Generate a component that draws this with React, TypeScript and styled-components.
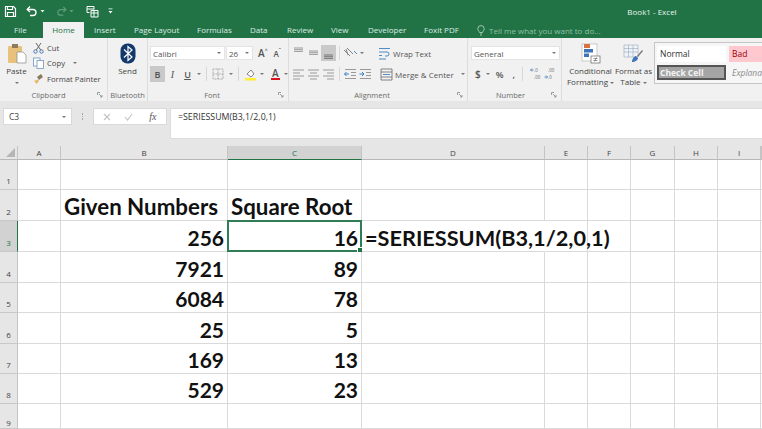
import React from "react";
import styled, { createGlobalStyle } from "styled-components";

const Global = createGlobalStyle`
  html, body { margin: 0; padding: 0; width: 762px; height: 429px; overflow: hidden; background: #fff; }
  body { font-family: "Open Sans", "Noto Sans", sans-serif; }
`;

const Page = styled.div`
  width: 762px; height: 429px; overflow: hidden; display: flex; flex-direction: column; background: #fff;
`;
const Green = "#217346";

const TitleBar = styled.div`
  height: 22px; background: ${Green}; display: flex; align-items: center; padding-left: 4px; color: #fff; flex: none;
`;
const QuickIcon = styled.svg<{ $gap?: number }>`
  flex: none; margin-right: ${(p) => p.$gap ?? 0}px; display: block;
`;
const DocTitle = styled.div`
  margin-left: auto; margin-right: 85px; font-size: 8px; color: #e9f3ec; width: 50px; text-align: center; white-space: nowrap;
`;
const TabBar = styled.div`
  height: 16px; background: ${Green}; display: flex; align-items: stretch; flex: none; padding-left: 14px;
`;
const Tab = styled.div<{ $active?: boolean; $w: number; $pl?: number }>`
  width: ${(p) => p.$w}px; flex: none; font-size: 8px; line-height: 16px; text-align: ${(p) => (p.$active ? "center" : "left")};
  padding-left: ${(p) => p.$pl ?? 0}px; box-sizing: border-box;
  color: ${(p) => (p.$active ? "#217346" : "#dcebe2")}; background: ${(p) => (p.$active ? "#f1f1f1" : "transparent")};
  white-space: nowrap;
`;
const TellMe = styled.div`
  display: flex; align-items: center; gap: 4px; font-size: 8px; color: #8fc0a3; white-space: nowrap;
`;
const Ribbon = styled.div`
  height: 63px; flex: none; background: #f1f1f1; display: flex; overflow: hidden;
`;
const Group = styled.div<{ $w: number }>`
  width: ${(p) => p.$w}px; flex: none; display: flex; flex-direction: column; border-right: 1px solid #dcdcdc; box-sizing: border-box; padding-top: 4px; position: relative;
`;
const GroupBody = styled.div`
  height: 47px; display: flex; flex: none;
`;
const StylesBody = styled(GroupBody)`
  flex: 1; padding-top: 4px;
`;
const GroupLabel = styled.div<{ $shift?: number }>`
  font-size: 7.5px; line-height: 12px; color: #6a6a6a; text-align: center; margin-left: ${(p) => p.$shift ?? 0}px;
`;
const Launcher = styled.svg`
  position: absolute; right: 4px; bottom: 3px;
`;
const BigButton = styled.div<{ $w: number; $ml?: number }>`
  width: ${(p) => p.$w}px; margin-left: ${(p) => p.$ml ?? 0}px; flex: none; display: flex; flex-direction: column; align-items: center;
  font-size: 8px; line-height: 11px; color: #444; text-align: center; white-space: nowrap;
`;
const BigIconSlot = styled.div`
  height: 22px; display: flex; align-items: center; justify-content: center; margin-bottom: 1px;
`;
const SmallStack = styled.div`
  display: flex; flex-direction: column; margin: -2px 0 0 5px;
`;
const SmallRow = styled.div`
  height: 15.5px; display: flex; align-items: center; gap: 3px; font-size: 7.7px; color: #444; white-space: nowrap;
`;
const Caret = styled.span<{ $ml?: number; $mt?: number }>`
  display: inline-block; width: 0; height: 0; border-left: 2px solid transparent; border-right: 2px solid transparent; border-top: 2px solid #777; flex: none;
  margin-left: ${(p) => p.$ml ?? 0}px; margin-top: ${(p) => p.$mt ?? 0}px; vertical-align: middle;
`;
const Column = styled.div<{ $pl?: number }>`
  display: flex; flex-direction: column; padding-left: ${(p) => p.$pl ?? 0}px; gap: 5px; padding-top: 3px;
`;
const Line = styled.div`
  display: flex; align-items: center; height: 16px; flex: none;
`;
const Combo = styled.div<{ $w: number; $ml?: number }>`
  width: ${(p) => p.$w}px; height: 14px; background: #fff; border: 1px solid #e3e3e3; box-sizing: border-box; display: flex; align-items: center;
  justify-content: space-between; padding: 0 3px 0 2px; font-size: 8px; color: #555; flex: none; margin-left: ${(p) => p.$ml ?? 0}px;
`;
const FormatBtn = styled.div<{ $active?: boolean }>`
  width: 15px; height: 16px; background: ${(p) => (p.$active ? "#c9c9c9" : "transparent")}; display: flex; align-items: center; justify-content: center; flex: none;
`;
const ItalicI = styled.span`
  font-family: "Liberation Serif", serif; font-size: 10px; color: #555; font-style: italic;
`;
const Glyph = styled.span<{ $size?: number; $ml?: number; $up?: number; $u?: boolean }>`
  font-size: ${(p) => p.$size ?? 9}px; color: #555; font-weight: 600; margin-left: ${(p) => p.$ml ?? 0}px; margin-bottom: ${(p) => p.$up ?? 0}px;
  text-decoration: ${(p) => (p.$u ? "underline" : "none")};
`;
const ColorA = styled(Glyph)`
  line-height: 10px; border-bottom: 2.5px solid #d8141c; padding: 0 1px;
`;
const Divider = styled.div<{ $mx?: number }>`
  width: 1px; height: 14px; background: #d8d8d8; margin: 0 ${(p) => p.$mx ?? 4}px; flex: none;
`;
const TextAction = styled.div<{ $ml?: number }>`
  display: flex; align-items: center; gap: 2px; font-size: 8px; color: #555; white-space: nowrap; margin-left: ${(p) => p.$ml ?? 0}px;
`;
const Gallery = styled.div`
  flex: none; width: 108px; height: 42px; margin-left: 1px; border: 1px solid #c6c6c6; border-right: 0; box-sizing: border-box; display: grid;
  grid-template-columns: 69px 60px; grid-template-rows: 16px 15px; gap: 3px 3px; padding: 3px 0 0 2px; background: #f6f6f6; overflow: hidden;
`;
const StyleChip = styled.div<{ $kind: "normal" | "bad" | "check" | "exp" }>`
  font-size: 8.5px; line-height: 15px; padding-left: 3px; box-sizing: border-box; white-space: nowrap;
  ${(p) => p.$kind === "normal" && "background:#fff;color:#333;"}
  ${(p) => p.$kind === "bad" && "background:#ffc7ce;color:#9c0006;"}
  ${(p) => p.$kind === "check" && "background:#a5a5a5;color:#f4f4f4;font-weight:700;border:2px solid #555;line-height:11px;font-size:8.5px;padding-left:1px;"}
  ${(p) => p.$kind === "exp" && "background:#f6f6f6;color:#8a8a8a;font-style:italic;"}
`;
const FormulaArea = styled.div`
  height: 45px; flex: none; background: #e6e6e6; display: flex; align-items: flex-start; padding: 7px 0 0 3px; box-sizing: border-box;
`;
const NameBox = styled.div`
  width: 69px; height: 17px; background: #fff; border: 1px solid #d9d9d9; box-sizing: border-box; display: flex; align-items: center; justify-content: space-between; padding: 0 5px 0 5px; font-size: 8.5px; color: #444;
`;
const Grip = styled.div`
  width: 21px; display: flex; flex-direction: column; align-items: center; gap: 1px; padding-top: 5px; flex: none;
`;
const GripDot = styled.span`
  width: 1.5px; height: 1.5px; background: #a8a8a8; display: block;
`;
const FxBox = styled.div`
  width: 74px; height: 17px; background: #fff; border: 1px solid #d9d9d9; box-sizing: border-box; display: flex; align-items: center; justify-content: space-around; padding: 0 3px; flex: none;
`;
const FxText = styled.span`
  font-family: "Liberation Serif", serif; font-style: italic; font-size: 10px; color: #555; margin-left: 3px;
`;
const FormulaInput = styled.div`
  margin-left: 3px; flex: 1; height: 31px; background: #fff; border: 1px solid #dcdcdc; border-right: 0; box-sizing: border-box; font-size: 8.8px; line-height: 17px; padding-left: 7px; color: #333;
`;
const Sheet = styled.div`
  flex: 1; display: grid; overflow: hidden; background: #fff;
  grid-template-columns: 18px 43px 167px 134px 183px 43px 43px 44px 43px 43px 1px;
  grid-template-rows: 14px 30px 31px 31px 31px 30px 31px 30px 30px 25px;
  font-family: Lato, "Open Sans", sans-serif;
`;
const Corner = styled.div`
  background: #e6e6e6; border-right: 1px solid #c4c4c4; border-bottom: 1px solid #b8b8b8; box-sizing: border-box; display: flex; align-items: flex-end; justify-content: flex-end; padding: 0 2px 2px 0;
`;
const ColHead = styled.div<{ $on?: boolean }>`
  background: ${(p) => (p.$on ? "#d2d2d2" : "#e6e6e6")}; border-right: 1px solid #c4c4c4; border-bottom: 1px solid ${(p) => (p.$on ? "#217346" : "#b8b8b8")};
  box-sizing: border-box; text-align: center; font-family: "Open Sans", sans-serif; font-size: 8px; line-height: 14px; color: ${(p) => (p.$on ? "#217346" : "#444")};
`;
const RowHead = styled.div<{ $on?: boolean }>`
  background: ${(p) => (p.$on ? "#d2d2d2" : "#e6e6e6")}; border-right: 1px solid ${(p) => (p.$on ? "#217346" : "#c4c4c4")}; border-bottom: 1px solid #c8c8c8;
  box-sizing: border-box; display: flex; align-items: center; justify-content: center; font-family: "Open Sans", sans-serif; font-size: 8px; color: ${(p) => (p.$on ? "#217346" : "#444")}; padding-top: 12px;
`;
const Cell = styled.div<{ $align?: "left" | "right"; $overflow?: boolean; $size?: number }>`
  border-right: 1px solid ${(p) => (p.$overflow ? "transparent" : "#dadada")}; border-bottom: 1px solid #dadada; box-sizing: border-box; position: relative;
  font-weight: 700; font-size: ${(p) => p.$size ?? 21}px; line-height: 26px; color: #111; padding: 0 3px; white-space: nowrap;
  display: flex; align-items: flex-end; justify-content: ${(p) => (p.$align === "left" ? "flex-start" : "flex-end")};
  z-index: ${(p) => (p.$overflow ? 2 : 1)};
`;
const Selection = styled.div`
  position: absolute; left: -1px; top: -1px; right: -1px; bottom: -1px; border: 2px solid #2f7d55; pointer-events: none;
`;
const Handle = styled.div`
  position: absolute; right: -3px; bottom: -3px; width: 4px; height: 4px; background: #217346; border: 1px solid #fff;
`;

const Launch = () => (
  <Launcher width="6" height="6" viewBox="0 0 6 6" fill="none" stroke="#888" strokeWidth="0.8">
    <path d="M0.5 3V.5H3" />
    <path d="M2 2l3 3M5 3v2H3" />
  </Launcher>
);

const AlignIcon = ({ kind }: { kind: "l" | "c" | "r" | "t" | "m" | "b" }) => {
  const rows: [number, number][] =
    kind === "l" ? [[2, 13], [2, 9], [2, 13], [2, 9]]
    : kind === "c" ? [[2, 13], [4, 11], [2, 13], [4, 11]]
    : kind === "r" ? [[2, 13], [6, 13], [2, 13], [6, 13]]
    : [[3, 12], [3, 12], [3, 12]];
  const y0 = kind === "t" ? 2 : kind === "m" ? 5 : kind === "b" ? 9 : 3;
  const step = kind === "t" || kind === "m" || kind === "b" ? 1.7 : 3;
  return (
    <svg width="15" height="15" viewBox="0 0 15 15" stroke={kind === "b" ? "#777" : "#9a9a9a"} strokeWidth="1">
      {rows.map(([a, b], i) => <line key={i} x1={a} x2={b} y1={y0 + i * step} y2={y0 + i * step} />)}
    </svg>
  );
};
const IndentIcon = ({ flip }: { flip?: boolean }) => (
  <svg width="15" height="13" viewBox="0 0 15 13" fill="none" strokeWidth="1">
    <path d="M2 1.5h11M8 4.5h5M8 7.5h5M2 10.5h11" stroke="#999" />
    <path d={flip ? "M1.5 6h4M4 4l2 2-2 2" : "M6 6H1.5M3.5 4l-2 2 2 2"} stroke="#3b7fc4" />
  </svg>
);
const DecimalIcon = ({ top, bottom, more }: { top: string; bottom: string; more?: boolean }) => (
  <svg width="12" height="14" viewBox="0 0 12 14" fontFamily="Open Sans, sans-serif" fontSize="4.4" fill="#666" style={{ marginRight: 2 }}>
    <text x="4" y="5">{top}</text>
    <text x="4" y="12">{bottom}</text>
    <path d={more ? "M0.5 3h3M2 1.5L.5 3 2 4.500" : "M0.500 10h3M2 8.500L3.500 10 2 11.500"} fill="none" stroke="#3b7fc4" strokeWidth="0.8" />
  </svg>
);

const tabs: [string, number, number?, boolean?][] = [
  ["File", 29], ["Home", 41, 0, true], ["Insert", 50, 10], ["Page Layout", 63], ["Formulas", 53], ["Data", 37], ["Review", 44], ["View", 37], ["Developer", 56], ["Foxit PDF", 53],
];
const cols = ["A", "B", "C", "D", "E", "F", "G", "H", "I"];
const data: Record<number, Record<string, string>> = {
  2: { B: "Given Numbers", C: "Square Root" },
  3: { B: "256", C: "16", D: "=SERIESSUM(B3,1/2,0,1)" },
  4: { B: "7921", C: "89" },
  5: { B: "6084", C: "78" },
  6: { B: "25", C: "5" },
  7: { B: "169", C: "13" },
  8: { B: "529", C: "23" },
};

export default function App() {
  return (
    <Page>
      <Global />
      <TitleBar>
        <QuickIcon $gap={9} width="13" height="13" viewBox="0 0 13 13" fill="none" stroke="#fff" strokeWidth="1.2">
          <path d="M1.5 1.5h8l2 2v8h-10z" /><path d="M3.5 1.5v3h5v-3M3.5 11.5v-4h6v4" />
        </QuickIcon>
        <QuickIcon $gap={2} width="12" height="12" viewBox="0 0 12 12" fill="none" stroke="#fff" strokeWidth="1.3">
          <path d="M1.5 4.5h5.5a3 3 0 010 6H4" /><path d="M4 1.5l-2.8 3L4 7" />
        </QuickIcon>
        <QuickIcon $gap={11} width="5" height="12" viewBox="0 0 5 12" fill="#dfeee6"><path d="M0.5 5h4L2.5 7.5z" /></QuickIcon>
        <QuickIcon $gap={2} width="11" height="12" viewBox="0 0 12 12" fill="none" stroke="#5f9d7b" strokeWidth="1.3">
          <path d="M10.5 4.5H5a3 3 0 000 6h3" /><path d="M8 1.5l2.8 3L8 7" />
        </QuickIcon>
        <QuickIcon $gap={12} width="5" height="12" viewBox="0 0 5 12" fill="#5f9d7b"><path d="M0.5 5h4L2.5 7.5z" /></QuickIcon>
        <QuickIcon $gap={9} width="13" height="13" viewBox="0 0 13 13" fill="none" stroke="#fff" strokeWidth="1">
          <path d="M1 1.5h7v3M1 1.5v6h2.5M1 4h7" /><path d="M5 5.5h7v6.5H5zM5 8h7M8 5.5V12" />
        </QuickIcon>
        <QuickIcon width="5" height="12" viewBox="0 0 5 12" fill="#fff"><path d="M0.5 3.5h4v.8h-4zM0.5 6h4L2.5 8.5z" /></QuickIcon>
        <DocTitle>Book1 - Excel</DocTitle>
      </TitleBar>
      <TabBar>
        {tabs.map(([t, w, pl, a]) => (
          <Tab key={t} $w={w} $pl={pl} $active={a}>{t}</Tab>
        ))}
        <TellMe>
          <svg width="8" height="11" viewBox="0 0 8 11" fill="none" stroke="#a8d0b8" strokeWidth="0.9">
            <path d="M2.5 7.5C2 6 .8 5.500 .8 3.800a3.200 3.200 0 016.400 0C7.200 5.500 6 6 5.500 7.500zM3 9h2M3.400 10.300h1.200" />
          </svg>
          Tell me what you want to do...
        </TellMe>
      </TabBar>
      <Ribbon>
        <Group $w={108}>
          <GroupBody>
            <BigButton $w={23} $ml={5}>
              <BigIconSlot>
                <svg width="20" height="21" viewBox="0 0 20 21">
                  <rect x="1" y="3" width="14" height="17" rx="1" fill="#e8c27d" />
                  <rect x="5" y="1" width="6" height="4" fill="#8b7a5c" />
                  <path d="M10 9h6l3 3v8h-9z" fill="#fff" stroke="#888" strokeWidth="0.7" />
                </svg>
              </BigIconSlot>
              Paste
              <Caret $mt={6} />
            </BigButton>
            <SmallStack>
              <SmallRow>
                <svg width="11" height="12" viewBox="0 0 11 12" fill="none" stroke="#4a78b0" strokeWidth="1">
                  <circle cx="2.500" cy="9.500" r="1.700" /><circle cx="8.500" cy="9.500" r="1.700" />
                  <path d="M3.300 8L8 1M7.700 8L3 1" stroke="#666" />
                </svg>
                Cut
              </SmallRow>
              <SmallRow>
                <svg width="11" height="12" viewBox="0 0 11 12" fill="#fff" stroke="#6f94bd" strokeWidth="0.8">
                  <rect x="0.500" y="1" width="6.500" height="8" /><rect x="4" y="3.500" width="6.500" height="8" />
                </svg>
                Copy
                <Caret $ml={5} />
              </SmallRow>
              <SmallRow>
                <svg width="11" height="12" viewBox="0 0 11 12">
                  <path d="M4 4l4-3 2 3-4 3z" fill="#8a7a60" /><path d="M5 6.500L1 8l3 3 2-4z" fill="#e5b868" />
                </svg>
                Format Painter
              </SmallRow>
            </SmallStack>
          </GroupBody>
          <GroupLabel $shift={-10}>Clipboard</GroupLabel>
          <Launch />
        </Group>
        <Group $w={40}>
          <GroupBody>
            <BigButton $w={39}>
              <BigIconSlot>
                <svg width="16" height="21" viewBox="0 0 16 21">
                  <rect x="0.500" y="0.500" width="15" height="20" rx="7" fill="#12396b" />
                  <path d="M4 6.500l8 7.500-4 3.500V3.500l4 3.500-8 7.500" fill="none" stroke="#fff" strokeWidth="1.200" />
                </svg>
              </BigIconSlot>
              Send
            </BigButton>
          </GroupBody>
          <GroupLabel>Bluetooth</GroupLabel>
        </Group>
        <Group $w={141}>
          <GroupBody>
            <Column $pl={2}>
              <Line>
                <Combo $w={75}>Calibri<Caret /></Combo>
                <Combo $w={27} $ml={1}>26<Caret /></Combo>
                <Glyph $size={10} $ml={5}>A</Glyph>
                <Glyph $size={5} $up={7}>^</Glyph>
                <Glyph $size={8} $ml={6}>A</Glyph>
                <Glyph $size={5} $up={7}>ˇ</Glyph>
              </Line>
              <Line>
                <FormatBtn $active><Glyph $size={9}>B</Glyph></FormatBtn>
                <FormatBtn><ItalicI>I</ItalicI></FormatBtn>
                <FormatBtn><Glyph $size={9} $u>U</Glyph></FormatBtn>
                <Caret $ml={2} />
                <Divider $mx={5} />
                <svg width="12" height="12" viewBox="0 0 12 12" fill="none" stroke="#999" strokeWidth="0.8" strokeDasharray="1 0.5">
                  <path d="M1 1h10v10H1zM6 1v10M1 6h10" />
                </svg>
                <Caret $ml={5} />
                <Divider $mx={5} />
                <svg width="13" height="14" viewBox="0 0 13 14">
                  <path d="M3 7l4-4 3 4-3 3z" fill="#fff" stroke="#666" strokeWidth="0.8" />
                  <rect x="1" y="11" width="11" height="2.500" fill="#ffee33" />
                </svg>
                <Caret $ml={3} />
                <ColorA $size={10} $ml={7}>A</ColorA>
                <Caret $ml={4} />
              </Line>
            </Column>
          </GroupBody>
          <GroupLabel $shift={-12}>Font</GroupLabel>
          <Launch />
        </Group>
        <Group $w={179}>
          <GroupBody>
            <Column $pl={2}>
              <Line>
                <FormatBtn><AlignIcon kind="t" /></FormatBtn>
                <FormatBtn><AlignIcon kind="m" /></FormatBtn>
                <FormatBtn $active><AlignIcon kind="b" /></FormatBtn>
                <Divider $mx={3} />
                <svg width="15" height="13" viewBox="0 0 15 13" fill="none" stroke="#777" strokeWidth="0.9">
                  <path d="M1 3l6 6M4 1l6 6M3 2l2 6" /><path d="M11 4l3 3" stroke="#3b7fc4" />
                </svg>
                <Caret $ml={2} />
                <TextAction $ml={14}>
                  <svg width="13" height="13" viewBox="0 0 13 13" fill="none" stroke="#3b7fc4" strokeWidth="0.9">
                    <path d="M1 1.500h11M1 5h8a2 2 0 010 4H7M1 8.500h3M1 12h7" />
                  </svg>
                  Wrap Text
                </TextAction>
              </Line>
              <Line>
                <FormatBtn><AlignIcon kind="l" /></FormatBtn>
                <FormatBtn><AlignIcon kind="c" /></FormatBtn>
                <FormatBtn><AlignIcon kind="r" /></FormatBtn>
                <Divider $mx={3} />
                <FormatBtn><IndentIcon /></FormatBtn>
                <FormatBtn><IndentIcon flip /></FormatBtn>
                <TextAction $ml={7}>
                  <svg width="13" height="13" viewBox="0 0 13 13" fill="none" stroke="#777" strokeWidth="0.9">
                    <path d="M1 1h11v11H1zM1 4h11M1 9h11" /><path d="M3 6.500h7" stroke="#3b7fc4" />
                  </svg>
                  Merge &amp; Center
                  <Caret $ml={5} />
                </TextAction>
              </Line>
            </Column>
          </GroupBody>
          <GroupLabel $shift={-12}>Alignment</GroupLabel>
          <Launch />
        </Group>
        <Group $w={94}>
          <GroupBody>
            <Column $pl={3}>
              <Line><Combo $w={89}>General<Caret /></Combo></Line>
              <Line>
                <Glyph $size={10} $ml={4}>$</Glyph>
                <Caret $ml={5} />
                <Glyph $size={9} $ml={6}>%</Glyph>
                <Glyph $size={9} $ml={9}>,</Glyph>
                <Divider $mx={7} />
                <DecimalIcon top=".0" bottom=".00" more />
                <DecimalIcon top=".00" bottom=".0" />
              </Line>
            </Column>
          </GroupBody>
          <GroupLabel $shift={-8}>Number</GroupLabel>
          <Launch />
        </Group>
        <StylesBody>
          <BigButton $w={47} $ml={5}>
            <BigIconSlot>
              <svg width="20" height="21" viewBox="0 0 20 21">
                <rect x="1" y="1" width="15" height="17" fill="#fff" stroke="#aaa" strokeWidth="0.6" />
                <rect x="3" y="1" width="6" height="4" fill="#d9703f" /><rect x="3" y="6" width="9" height="3.500" fill="#3f74b8" /><rect x="3" y="10.500" width="5" height="3.500" fill="#3f74b8" />
                <rect x="10" y="13" width="9" height="7" fill="#fff" stroke="#666" strokeWidth="0.7" />
                <path d="M12.500 15.500h4M12.500 17.500h4M15.500 14.500l-2 4" stroke="#555" strokeWidth="0.6" />
              </svg>
            </BigIconSlot>
            Conditional
            <span>Formatting <Caret /></span>
          </BigButton>
          <BigButton $w={39}>
            <BigIconSlot>
              <svg width="21" height="21" viewBox="0 0 21 21">
                <path d="M1 2h14v12H1zM1 5.500h14M1 9h14M5.500 2v12M10 2v12" fill="#eef3fa" stroke="#9aa9bb" strokeWidth="0.6" />
                <path d="M9 19c0-4 3-6 4-6l2 2c0 2-3 4-6 4z" fill="#3f74b8" /><path d="M14 13l5-6 1 1-5 6z" fill="#777" />
              </svg>
            </BigIconSlot>
            Format as
            <span>Table <Caret /></span>
          </BigButton>
          <Gallery>
            <StyleChip $kind="normal">Normal</StyleChip>
            <StyleChip $kind="bad">Bad</StyleChip>
            <StyleChip $kind="check">Check Cell</StyleChip>
            <StyleChip $kind="exp">Explanatory...</StyleChip>
          </Gallery>
        </StylesBody>
      </Ribbon>
      <FormulaArea>
        <NameBox>C3<Caret /></NameBox>
        <Grip><GripDot /><GripDot /><GripDot /></Grip>
        <FxBox>
          <svg width="8" height="8" viewBox="0 0 8 8" stroke="#c4c4c4" strokeWidth="1.100"><path d="M1 1l6 6M7 1L1 7" /></svg>
          <svg width="9" height="8" viewBox="0 0 9 8" fill="none" stroke="#c4c4c4" strokeWidth="1.100"><path d="M1 4l2.500 3L8 1" /></svg>
          <FxText>fx</FxText>
        </FxBox>
        <FormulaInput>=SERIESSUM(B3,1/2,0,1)</FormulaInput>
      </FormulaArea>
      <Sheet>
        <Corner>
          <svg width="9" height="9" viewBox="0 0 9 9"><path d="M9 0v9H0z" fill="#b6b6b6" /></svg>
        </Corner>
        {cols.map((c) => <ColHead key={c} $on={c === "C"}>{c}</ColHead>)}
        <ColHead />
        {Array.from({ length: 9 }, (_, i) => i + 1).map((r) => (
          <React.Fragment key={r}>
            <RowHead $on={r === 3}>{r}</RowHead>
            {cols.map((c) => (
              <Cell
                key={c}
                $align={(c === "D" && r === 3) || r === 2 ? "left" : "right"}
                $overflow={c === "D" && r === 3}
                $size={r === 2 ? 22.3 : c === "D" ? 21.7 : 21}
              >
                {data[r]?.[c]}
                {r === 3 && c === "C" && <Selection><Handle /></Selection>}
              </Cell>
            ))}
            <Cell />
          </React.Fragment>
        ))}
      </Sheet>
    </Page>
  );
}
